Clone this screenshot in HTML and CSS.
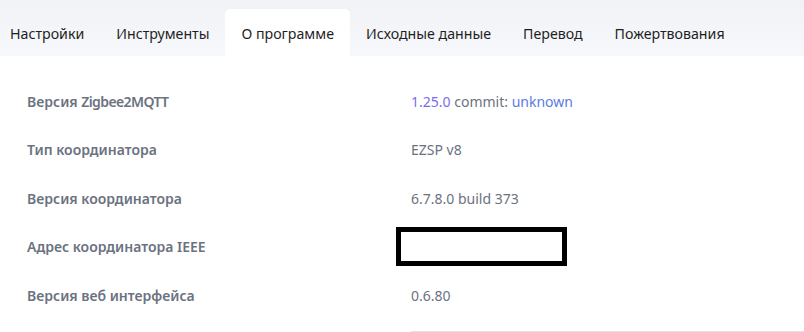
FILE: index.html
```html
<!DOCTYPE html>
<html lang="ru">
<head>
<meta charset="utf-8">
<title>О программе</title>
<link rel="stylesheet" href="styles.css">
</head>
<body>
<nav class="tabs">
  <a class="tab first">Настройки</a>
  <a class="tab">Инструменты</a>
  <a class="tab active">О программе</a>
  <a class="tab">Исходные данные</a>
  <a class="tab">Перевод</a>
  <a class="tab">Пожертвования</a>
</nav>
<main class="about">
  <div class="label">Версия <span class="latin">Zigbee2MQTT</span></div>
  <div class="value"><span class="ver">1.25.0</span> commit: <span class="link">unknown</span></div>
  <div class="label">Тип координатора</div>
  <div class="value">EZSP v8</div>
  <div class="label">Версия координатора</div>
  <div class="value">6.7.8.0 build 373</div>
  <div class="label">Адрес координатора IEEE</div>
  <div class="value"><div class="redact"></div></div>
  <div class="label">Версия веб интерфейса</div>
  <div class="value">0.6.80</div>
</main>
<div class="rule"></div>
</body>
</html>
```
FILE: styles.css
```css
html, body {
  margin: 0;
  background: #ffffff;
}
body {
  font-family: "Noto Sans", "Open Sans", sans-serif;
  height: 332px;
  overflow: hidden;
}
.tabs {
  display: flex;
  height: 56px;
  box-sizing: border-box;
  padding-top: 9px;
  background: linear-gradient(#f1f2f5, #f7f8fb);
}
.tab {
  display: flex;
  align-items: center;
  padding: 2px 16px 0 16px;
  font-size: 14.2px;
  color: #1f1f1f;
  border-radius: 5px 5px 0 0;
}
.tab.first {
  padding-left: 10px;
}
.tab.active {
  background: #ffffff;
}
.about {
  display: grid;
  grid-template-columns: 384px 1fr;
  grid-auto-rows: 48.5px;
  padding: 21px 0 0 27px;
  align-items: center;
}
.label {
  font-size: 14px;
  font-weight: 600;
  color: #6b7280;
}
.latin {
  letter-spacing: -0.6px;
}
.value {
  font-size: 14px;
  color: #6b7280;
}
.ver {
  color: #7a6cf0;
}
.link {
  color: #5b7be6;
}
.redact {
  width: 171px;
  height: 39px;
  box-sizing: border-box;
  border: 5px solid #000000;
  margin-left: -15px;
}
.rule {
  margin: 11px 0 0 411px;
  border-top: 1px solid #e3e3e3;
}
```
